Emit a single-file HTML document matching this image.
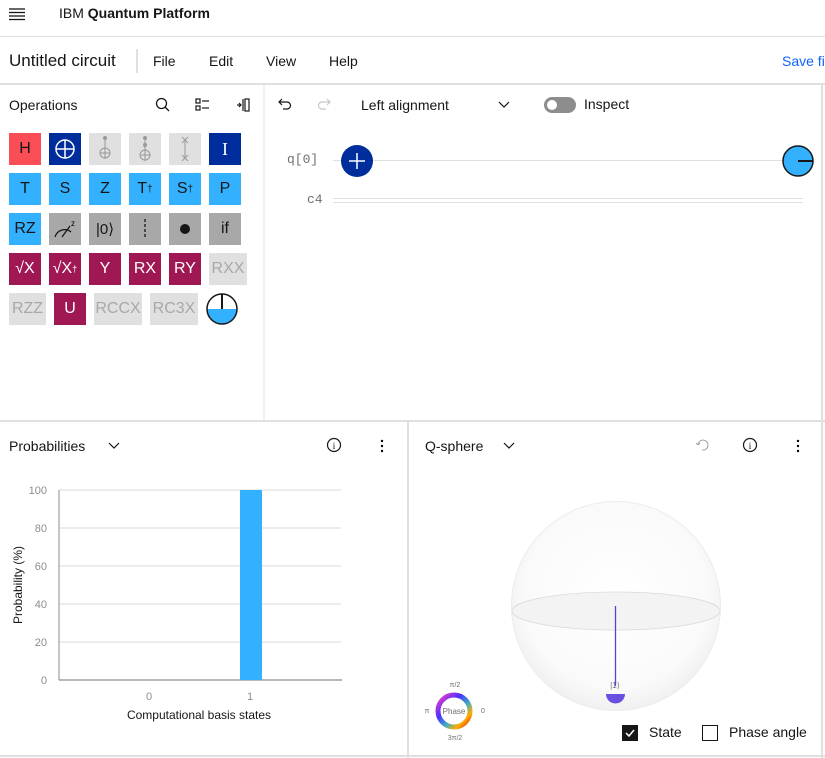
<!DOCTYPE html>
<html><head><meta charset="utf-8"><style>
*{margin:0;padding:0;box-sizing:border-box}
body{width:825px;height:758px;overflow:hidden;background:#fff;font-family:"Liberation Sans",sans-serif;color:#161616;position:relative}
.a{position:absolute}
.g{position:absolute;width:32px;height:32px;display:flex;align-items:center;justify-content:center;font-size:16px;color:#161616}
.cy{background:#33b1ff}.mg{background:#9f1853;color:#fff}.gr{background:#a8a8a8}.lg{background:#e0e0e0;color:#a8a8a8}.nv{background:#002d9c;color:#fff}
.t14{font-size:14px}
</style></head><body>
<!-- header -->
<svg class="a" style="left:8px;top:7px" width="18" height="14"><g stroke="#161616" stroke-width="1.3"><line x1="1" y1="2" x2="17" y2="2"/><line x1="1" y1="5.5" x2="17" y2="5.5"/><line x1="1" y1="9" x2="17" y2="9"/><line x1="1" y1="12.5" x2="17" y2="12.5"/></g></svg>
<div class="a" style="left:59px;top:5px;font-size:14px">IBM <b>Quantum Platform</b></div>
<div class="a" style="left:0;top:36px;width:825px;height:1px;background:#e0e0e0"></div>
<div class="a" style="left:9px;top:51px;font-size:17px">Untitled circuit</div>
<div class="a" style="left:136px;top:49px;width:2px;height:24px;background:#e0e0e0"></div>
<div class="a t14" style="left:153px;top:53px">File</div>
<div class="a t14" style="left:209px;top:53px">Edit</div>
<div class="a t14" style="left:266px;top:53px">View</div>
<div class="a t14" style="left:329px;top:53px">Help</div>
<div class="a t14" style="left:782px;top:53px;color:#0f62fe">Save fi</div>
<div class="a" style="left:0;top:83px;width:825px;height:2px;background:#e0e0e0"></div>
<!-- operations -->
<div class="a t14" style="left:9px;top:97px">Operations</div>
<svg class="a" style="left:155px;top:97px" width="16" height="16"><circle cx="6.5" cy="6.5" r="5" fill="none" stroke="#161616" stroke-width="1.3"/><line x1="10" y1="10" x2="14" y2="14" stroke="#161616" stroke-width="1.3"/></svg>
<svg class="a" style="left:195px;top:98px" width="16" height="14"><g fill="none" stroke="#161616" stroke-width="1.2"><rect x="1" y="1" width="4" height="4"/><rect x="1" y="8" width="4" height="4"/><line x1="7" y1="3" x2="14" y2="3"/><line x1="7" y1="10" x2="14" y2="10"/></g></svg>
<svg class="a" style="left:236px;top:98px" width="14" height="14"><g fill="none" stroke="#161616" stroke-width="1.2"><line x1="1" y1="7" x2="5" y2="7"/><path d="M3 5 L5 7 L3 9"/><line x1="7" y1="1" x2="7" y2="13"/><rect x="9" y="1" width="4" height="12"/></g></svg>
<div class="a" style="left:263px;top:85px;width:2px;height:336px;background:#f0f0f0"></div>

<div class="g" style="left:9px;top:133px;background:#fa4d56">H</div>
<div class="g nv" style="left:49px;top:133px"><svg width="22" height="22"><circle cx="11" cy="11" r="9" fill="none" stroke="#fff" stroke-width="1.5"/><line x1="2" y1="11" x2="20" y2="11" stroke="#fff" stroke-width="1.5"/><line x1="11" y1="2" x2="11" y2="20" stroke="#fff" stroke-width="1.5"/></svg></div>
<div class="g lg" style="left:89px;top:133px"><svg width="20" height="28"><circle cx="10" cy="3" r="2" fill="#999"/><line x1="10" y1="3" x2="10" y2="24" stroke="#999"/><circle cx="10" cy="18" r="5" fill="none" stroke="#999"/><line x1="5" y1="18" x2="15" y2="18" stroke="#999"/></svg></div>
<div class="g lg" style="left:129px;top:133px"><svg width="20" height="28"><circle cx="10" cy="3" r="2" fill="#999"/><circle cx="10" cy="10" r="2" fill="#999"/><line x1="10" y1="3" x2="10" y2="26" stroke="#999"/><circle cx="10" cy="20" r="5" fill="none" stroke="#999"/><line x1="5" y1="20" x2="15" y2="20" stroke="#999"/></svg></div>
<div class="g lg" style="left:169px;top:133px"><svg width="20" height="28"><g stroke="#999"><line x1="7" y1="2" x2="13" y2="8"/><line x1="13" y1="2" x2="7" y2="8"/><line x1="10" y1="5" x2="10" y2="23"/><line x1="7" y1="20" x2="13" y2="26"/><line x1="13" y1="20" x2="7" y2="26"/></g></svg></div>
<div class="g nv" style="left:209px;top:133px;font-family:'Liberation Serif',serif;font-size:18px">I</div>

<div class="g cy" style="left:9px;top:173px">T</div>
<div class="g cy" style="left:49px;top:173px">S</div>
<div class="g cy" style="left:89px;top:173px">Z</div>
<div class="g cy" style="left:129px;top:173px">T<sup style="font-size:10px">†</sup></div>
<div class="g cy" style="left:169px;top:173px">S<sup style="font-size:10px">†</sup></div>
<div class="g cy" style="left:209px;top:173px">P</div>

<div class="g cy" style="left:9px;top:213px">RZ</div>
<div class="g gr" style="left:49px;top:213px"><svg width="26" height="22"><path d="M3 19 A10 10 0 0 1 19 14" fill="none" stroke="#161616" stroke-width="1.3"/><line x1="10" y1="19" x2="18" y2="8" stroke="#161616" stroke-width="1.3"/><text x="19" y="8" font-size="8" font-family="Liberation Sans">z</text></svg></div>
<div class="g gr" style="left:89px;top:213px;font-size:15px">|0⟩</div>
<div class="g gr" style="left:129px;top:213px"><svg width="4" height="20"><line x1="2" y1="0" x2="2" y2="20" stroke="#161616" stroke-width="1.3" stroke-dasharray="3 2"/></svg></div>
<div class="g gr" style="left:169px;top:213px"><div style="width:10px;height:10px;border-radius:50%;background:#161616"></div></div>
<div class="g gr" style="left:209px;top:213px">if</div>

<div class="g mg" style="left:9px;top:253px">√X</div>
<div class="g mg" style="left:49px;top:253px">√X<sup style="font-size:9px">†</sup></div>
<div class="g mg" style="left:89px;top:253px">Y</div>
<div class="g mg" style="left:129px;top:253px">RX</div>
<div class="g mg" style="left:169px;top:253px">RY</div>
<div class="g lg" style="left:209px;top:253px;width:38px">RXX</div>

<div class="g lg" style="left:9px;top:293px;width:37px">RZZ</div>
<div class="g mg" style="left:54px;top:293px">U</div>
<div class="g lg" style="left:94px;top:293px;width:48px">RCCX</div>
<div class="g lg" style="left:150px;top:293px;width:48px">RC3X</div>
<svg class="a" style="left:205px;top:292px" width="34" height="34"><path d="M2 17 A15 15 0 0 0 32 17 Z" fill="#33b1ff"/><circle cx="17" cy="17" r="15" fill="none" stroke="#161616" stroke-width="1.5"/><line x1="17" y1="2" x2="17" y2="17" stroke="#161616" stroke-width="2"/></svg>

<!-- circuit -->
<svg class="a" style="left:278px;top:98px" width="14" height="12"><path d="M4 1 L1 4 L4 7 M1 4 H9 A3.5 3.5 0 0 1 9 11 H5" fill="none" stroke="#161616" stroke-width="1.2"/></svg>
<svg class="a" style="left:317px;top:98px" width="14" height="12"><path d="M10 1 L13 4 L10 7 M13 4 H5 A3.5 3.5 0 0 0 5 11 H9" fill="none" stroke="#c6c6c6" stroke-width="1.2"/></svg>
<div class="a t14" style="left:361px;top:97px">Left alignment</div>
<svg class="a" style="left:498px;top:101px" width="12" height="8"><path d="M1 1 L6 6 L11 1" fill="none" stroke="#161616" stroke-width="1.2"/></svg>
<div class="a" style="left:544px;top:97px;width:32px;height:16px;border-radius:8px;background:#8d8d8d"></div>
<div class="a" style="left:547px;top:100px;width:10px;height:10px;border-radius:50%;background:#fff"></div>
<div class="a t14" style="left:584px;top:96px">Inspect</div>

<div class="a" style="left:287px;top:152px;font-family:'Liberation Mono',monospace;font-size:13px;color:#6f6f6f">q[0]</div>
<div class="a" style="left:333px;top:160px;width:450px;height:1px;background:#e0e0e0"></div>
<div class="a" style="left:341px;top:145px;width:32px;height:32px;border-radius:50%;background:#002d9c"></div>
<svg class="a" style="left:341px;top:145px" width="32" height="32"><line x1="8" y1="16" x2="24" y2="16" stroke="#fff" stroke-width="1.5"/><line x1="16" y1="8" x2="16" y2="24" stroke="#fff" stroke-width="1.5"/></svg>
<svg class="a" style="left:781px;top:144px" width="34" height="34"><circle cx="17" cy="17" r="15" fill="#33b1ff" stroke="#161616" stroke-width="1.5"/><line x1="17" y1="17" x2="32" y2="17" stroke="#161616" stroke-width="2"/></svg>
<div class="a" style="left:307px;top:192px;font-family:'Liberation Mono',monospace;font-size:13px;color:#6f6f6f">c4</div>
<div class="a" style="left:333px;top:198px;width:470px;height:1px;background:#e0e0e0"></div>
<div class="a" style="left:333px;top:202px;width:470px;height:1px;background:#e0e0e0"></div>
<div class="a" style="left:821px;top:85px;width:2px;height:335px;background:#e0e0e0"></div>

<!-- bottom borders -->
<div class="a" style="left:0;top:420px;width:825px;height:2px;background:#e0e0e0"></div>
<div class="a" style="left:407px;top:420px;width:2px;height:338px;background:#e0e0e0"></div>
<div class="a" style="left:0;top:755px;width:825px;height:2px;background:#e0e0e0"></div>
<div class="a" style="left:821px;top:420px;width:2px;height:338px;background:#e0e0e0"></div>

<!-- probabilities -->
<div class="a t14" style="left:9px;top:438px">Probabilities</div>
<svg class="a" style="left:108px;top:442px" width="12" height="8"><path d="M1 1 L6 6 L11 1" fill="none" stroke="#161616" stroke-width="1.2"/></svg>
<svg class="a" style="left:326px;top:437px" width="16" height="16"><circle cx="8" cy="8" r="6.5" fill="none" stroke="#161616" stroke-width="1.2"/><text x="8" y="12" font-size="9" text-anchor="middle" font-family="Liberation Serif">i</text></svg>
<svg class="a" style="left:380px;top:439px" width="4" height="14"><circle cx="2" cy="2" r="1.2"/><circle cx="2" cy="7" r="1.2"/><circle cx="2" cy="12" r="1.2"/></svg>
<svg class="a" style="left:0;top:470px" width="408" height="260">
<g stroke="#e0e0e0" stroke-width="1.3"><line x1="59" y1="20" x2="341" y2="20"/><line x1="59" y1="58" x2="341" y2="58"/><line x1="59" y1="96" x2="341" y2="96"/><line x1="59" y1="134" x2="341" y2="134"/><line x1="59" y1="172" x2="341" y2="172"/></g>
<line x1="59" y1="20" x2="59" y2="210" stroke="#a8a8a8" stroke-width="1.3"/>
<line x1="59" y1="210" x2="342" y2="210" stroke="#8d8d8d" stroke-width="1.3"/>
<rect x="240" y="20" width="22" height="190" fill="#33b1ff"/>
<g font-size="11" fill="#8d8d8d" font-family="Liberation Sans" text-anchor="end"><text x="47" y="24">100</text><text x="47" y="62">80</text><text x="47" y="100">60</text><text x="47" y="138">40</text><text x="47" y="176">20</text><text x="47" y="214">0</text></g>
<g font-size="11" fill="#8d8d8d" font-family="Liberation Sans" text-anchor="middle"><text x="149" y="230">0</text><text x="250" y="230">1</text></g>
<text x="199" y="249" font-size="12" text-anchor="middle" fill="#161616" font-family="Liberation Sans">Computational basis states</text>
<text transform="translate(22 115) rotate(-90)" font-size="12" text-anchor="middle" fill="#161616" font-family="Liberation Sans">Probability (%)</text>
</svg>

<!-- Q-sphere -->
<div class="a t14" style="left:425px;top:438px">Q-sphere</div>
<svg class="a" style="left:503px;top:442px" width="12" height="8"><path d="M1 1 L6 6 L11 1" fill="none" stroke="#161616" stroke-width="1.2"/></svg>
<svg class="a" style="left:694px;top:437px" width="16" height="16"><path d="M4 8 A5 5 0 1 1 8 13 M4 8 L2 6 M4 8 L6 6" fill="none" stroke="#a8a8a8" stroke-width="1.1"/></svg>
<svg class="a" style="left:742px;top:437px" width="16" height="16"><circle cx="8" cy="8" r="6.5" fill="none" stroke="#161616" stroke-width="1.2"/><text x="8" y="12" font-size="9" text-anchor="middle" font-family="Liberation Serif">i</text></svg>
<svg class="a" style="left:796px;top:439px" width="4" height="14"><circle cx="2" cy="2" r="1.2"/><circle cx="2" cy="7" r="1.2"/><circle cx="2" cy="12" r="1.2"/></svg>
<svg class="a" style="left:410px;top:490px" width="412" height="265">
<defs><radialGradient id="sg" cx="50%" cy="45%" r="55%"><stop offset="0" stop-color="#fff"/><stop offset=".8" stop-color="#fafafa"/><stop offset="1" stop-color="#f0f0f0"/></radialGradient></defs>
<circle cx="206" cy="116" r="104.5" fill="url(#sg)" stroke="#ececec"/>
<ellipse cx="206" cy="121" rx="104" ry="19" fill="#f3f3f3" stroke="#dcdcdc" stroke-width="0.8"/>
<line x1="205.5" y1="116" x2="205.5" y2="196" stroke="#5b3fd6" stroke-width="1.3"/>
<path d="M196 204 H215 A9.5 9.5 0 0 1 196 204Z" fill="#6b4fe0"/>
<text x="205" y="198" font-size="8" fill="#6f6f6f" text-anchor="middle" font-family="Liberation Sans">|1⟩</text>
<defs><linearGradient id="pg" x1="0" y1="0" x2="1" y2="1"><stop offset="0" stop-color="#ff40c0"/><stop offset=".35" stop-color="#4a2fff"/><stop offset=".6" stop-color="#40b0c0"/><stop offset=".8" stop-color="#ffb000"/><stop offset="1" stop-color="#e02020"/></linearGradient></defs>
<circle cx="44" cy="221" r="16" fill="none" stroke="url(#pg)" stroke-width="5"/>
<text x="44" y="224" font-size="8" fill="#6f6f6f" text-anchor="middle" font-family="Liberation Sans">Phase</text>
<text x="45" y="197" font-size="7" fill="#6f6f6f" text-anchor="middle" font-family="Liberation Sans">π/2</text>
<text x="45" y="250" font-size="7" fill="#6f6f6f" text-anchor="middle" font-family="Liberation Sans">3π/2</text>
<text x="17" y="223" font-size="7" fill="#6f6f6f" text-anchor="middle" font-family="Liberation Sans">π</text>
<text x="73" y="223" font-size="7" fill="#6f6f6f" text-anchor="middle" font-family="Liberation Sans">0</text>
</svg>
<div class="a" style="left:622px;top:725px;width:16px;height:16px;background:#161616"></div>
<svg class="a" style="left:622px;top:725px" width="16" height="16"><path d="M4 8 L7 11 L12 5" fill="none" stroke="#fff" stroke-width="1.5"/></svg>
<div class="a t14" style="left:649px;top:724px">State</div>
<div class="a" style="left:702px;top:725px;width:16px;height:16px;border:1px solid #161616"></div>
<div class="a t14" style="left:729px;top:724px">Phase angle</div>
</body></html>
